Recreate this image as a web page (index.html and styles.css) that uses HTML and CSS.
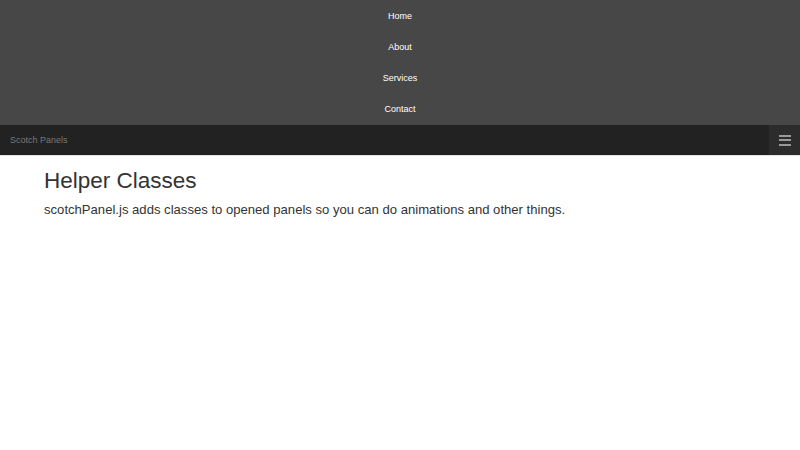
FILE: index.html
```html
<!DOCTYPE html>
<html>
<head>
<meta charset="utf-8">
<link rel="stylesheet" href="styles.css">
</head>
<body>
<nav class="panel">
  <a class="panel-link" href="#">Home</a>
  <a class="panel-link" href="#">About</a>
  <a class="panel-link" href="#">Services</a>
  <a class="panel-link" href="#">Contact</a>
</nav>
<header class="navbar">
  <span class="brand">Scotch Panels</span>
  <button class="toggle" aria-label="menu">
    <span class="bar"></span><span class="bar"></span><span class="bar"></span>
  </button>
</header>
<main class="content">
  <h1 class="title">Helper Classes</h1>
  <p class="lead">scotchPanel.js adds classes to opened panels so you can do animations and other things.</p>
</main>
</body>
</html>
```
FILE: styles.css
```css
html, body {
  margin: 0;
  padding: 0;
  background: #fff;
  font-family: "Liberation Sans", Arial, sans-serif;
  color: #333;
}
.panel {
  background: #474747;
  display: flex;
  flex-direction: column;
  height: 125px;
}
.panel-link {
  flex: 1;
  display: flex;
  align-items: center;
  justify-content: center;
  color: #fff;
  font-size: 9px;
  text-decoration: none;
}
.navbar {
  background: #222;
  height: 30px;
  border-bottom: 1px solid #e3e3e3;
  display: flex;
  align-items: stretch;
  justify-content: space-between;
}
.brand {
  align-self: center;
  padding-left: 10px;
  font-size: 9px;
  color: #777;
}
.toggle {
  width: 31px;
  border: none;
  padding: 0;
  background: #2c2c2c;
  display: flex;
  flex-direction: column;
  align-items: center;
  justify-content: center;
  gap: 2.5px;
}
.bar {
  display: block;
  width: 12px;
  height: 2px;
  background: #999;
}
.content {
  padding: 11px 44px 0;
}
.title {
  margin: 0;
  font-size: 22.5px;
  font-weight: normal;
  line-height: 1.2;
}
.lead {
  margin: 7px 0 0;
  font-size: 13.1px;
  line-height: 1.4;
}
```
